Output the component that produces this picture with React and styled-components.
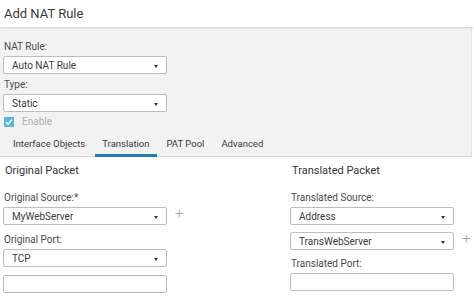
import React from 'react';
import styled, { createGlobalStyle } from 'styled-components';

const GlobalStyle = createGlobalStyle`
  body {
    margin: 0;
    background: #fff;
    font-family: Roboto, "Liberation Sans", sans-serif;
    color: #3a3a3a;
  }
`;

const Header = styled.header`
  height: 27px;
  padding-left: 4px;
  display: flex;
  align-items: center;
  font-size: 13px;
  color: #3a3a3a;
  background: #fff;
  box-shadow: 0 1px 2px rgba(0, 0, 0, 0.14);
  position: relative;
  z-index: 1;
`;

const Panel = styled.section`
  background: #f2f2f2;
  margin-right: 2px;
  border-right: 1px solid #e4e4e4;
  padding: 13px 0 0 3px;
  border-bottom: 1px solid #d3d3d3;
`;

const Label = styled.div`
  font-size: 10px;
  color: #4a4a4a;
  line-height: 13px;
  margin: ${(p) => p.$top || 0}px 0 3px 1px;
`;

const SelectBox = styled.div`
  width: ${(p) => p.$width || 164}px;
  height: 18px;
  box-sizing: border-box;
  border: 1px solid #bdbdbd;
  border-radius: 2px;
  background: #fff;
  display: flex;
  align-items: center;
  justify-content: space-between;
  padding: 0 8px 0 8px;
  font-size: 10px;
  color: #3a3a3a;
`;

const Caret = styled.span`
  width: 0;
  height: 0;
  border-left: 2.5px solid transparent;
  border-right: 2.5px solid transparent;
  border-top: 3.5px solid #333;
  margin-top: 2px;
`;

const Row = styled.div`
  display: flex;
  align-items: center;
  gap: 8px;
  margin-top: ${(p) => p.$top || 0}px;
`;

const Plus = styled.span`
  font-size: 15px;
  font-weight: 300;
  color: #a0a0a0;
  line-height: 1;
  margin-top: -5px;
`;

const CheckRow = styled.label`
  display: flex;
  align-items: center;
  gap: 8px;
  margin: 4px 0 0 1px;
  font-size: 10px;
  color: #b0b0b0;
`;

const Check = styled.span`
  width: 10px;
  height: 10px;
  border-radius: 1px;
  background: #5cb3de;
  display: flex;
  align-items: center;
  justify-content: center;
`;

const Tabs = styled.nav`
  display: flex;
  gap: 3px;
  margin-top: 7px;
  padding-left: 3px;
`;

const Tab = styled.span`
  font-size: 9.5px;
  color: #3a3a3a;
  padding: 4px 7px 5px;
  border-bottom: 3px solid ${(p) => (p.$active ? '#1f7fb3' : 'transparent')};
  margin-bottom: -1px;
`;

const Body = styled.main`
  display: grid;
  grid-template-columns: 287px 1fr;
  padding: 7px 0 0 3px;
`;

const Column = styled.div`
  display: flex;
  flex-direction: column;
`;

const SectionTitle = styled.h2`
  margin: 0 0 0 2px;
  font-size: 11px;
  font-weight: 400;
  color: #333;
  line-height: 14px;
`;

const TextInput = styled.div`
  width: 164px;
  height: 18px;
  box-sizing: border-box;
  border: 1px solid #bdbdbd;
  border-radius: 2px;
  background: #fff;
  margin-top: ${(p) => p.$top || 0}px;
`;

const Select = ({ value, width }) => (
  <SelectBox $width={width}>
    <span>{value}</span>
    <Caret />
  </SelectBox>
);

export default function App() {
  return (
    <>
      <GlobalStyle />
      <Header>Add NAT Rule</Header>
      <Panel>
        <Label>NAT Rule:</Label>
        <Select value="Auto NAT Rule" />
        <Label $top={4}>Type:</Label>
        <Select value="Static" />
        <CheckRow>
          <Check>
            <svg width="8" height="8" viewBox="0 0 8 8">
              <path d="M1 4.2 L3.2 6.2 L7 1.6" fill="none" stroke="#fff" strokeWidth="1.6" />
            </svg>
          </Check>
          Enable
        </CheckRow>
        <Tabs>
          <Tab>Interface Objects</Tab>
          <Tab $active>Translation</Tab>
          <Tab>PAT Pool</Tab>
          <Tab>Advanced</Tab>
        </Tabs>
      </Panel>
      <Body>
        <Column>
          <SectionTitle>Original Packet</SectionTitle>
          <Label $top={13}>Original Source:*</Label>
          <Row>
            <Select value="MyWebServer" />
            <Plus>+</Plus>
          </Row>
          <Label $top={8}>Original Port:</Label>
          <Select value="TCP" />
          <TextInput $top={8} />
        </Column>
        <Column>
          <SectionTitle>Translated Packet</SectionTitle>
          <Label $top={13}>Translated Source:</Label>
          <Select value="Address" />
          <Row $top={7}>
            <Select value="TransWebServer" />
            <Plus>+</Plus>
          </Row>
          <Label $top={7}>Translated Port:</Label>
          <TextInput />
        </Column>
      </Body>
    </>
  );
}
